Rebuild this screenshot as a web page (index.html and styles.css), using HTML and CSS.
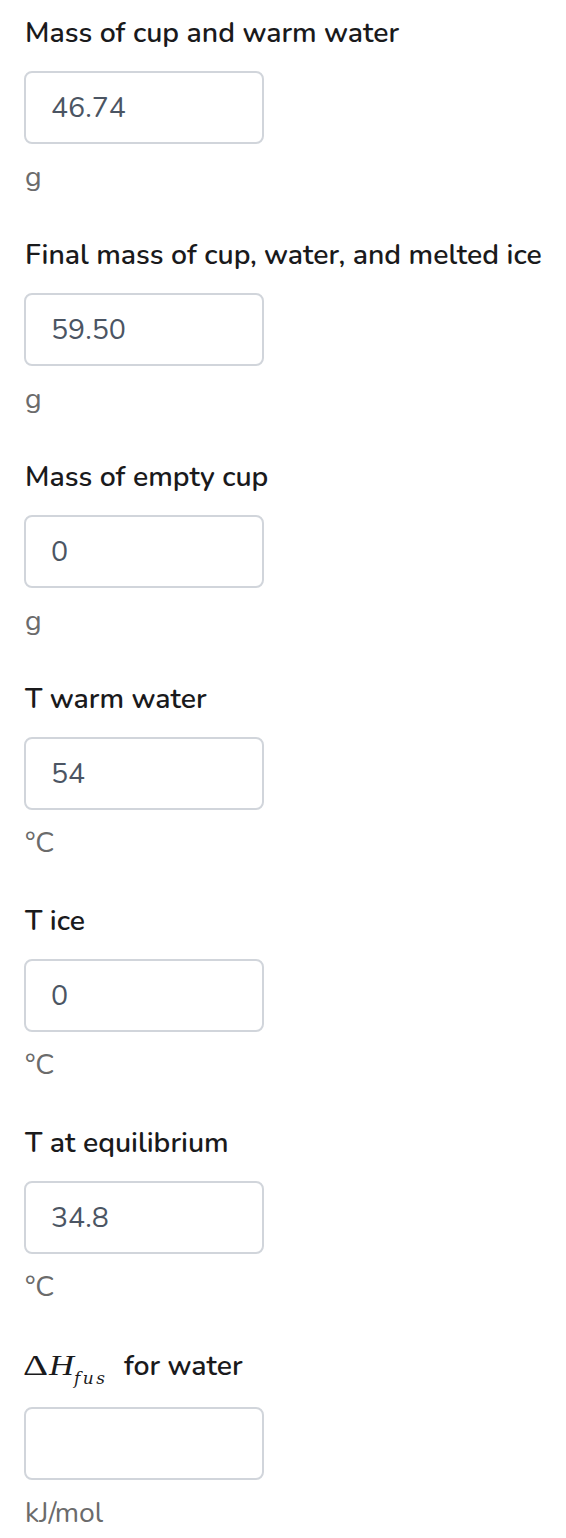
FILE: index.html
```html
<!DOCTYPE html>
<html lang="en">
<head>
<meta charset="utf-8">
<title>Calorimetry inputs</title>
<link rel="stylesheet" href="styles.css">
</head>
<body>
<form class="form">
  <div class="field">
    <label class="label">Mass of cup and warm water</label>
    <input class="input" type="text" value="46.74">
    <div class="unit">g</div>
  </div>
  <div class="field">
    <label class="label">Final mass of cup, water, and melted ice</label>
    <input class="input" type="text" value="59.50">
    <div class="unit">g</div>
  </div>
  <div class="field">
    <label class="label">Mass of empty cup</label>
    <input class="input" type="text" value="0">
    <div class="unit">g</div>
  </div>
  <div class="field">
    <label class="label">T warm water</label>
    <input class="input" type="text" value="54">
    <div class="unit">°C</div>
  </div>
  <div class="field">
    <label class="label">T ice</label>
    <input class="input" type="text" value="0">
    <div class="unit">°C</div>
  </div>
  <div class="field">
    <label class="label">T at equilibrium</label>
    <input class="input" type="text" value="34.8">
    <div class="unit">°C</div>
  </div>
  <div class="field">
    <label class="label"><span class="math"><span class="delta">Δ</span><span class="mi">H</span><span class="sub">fus</span></span> for water</label>
    <input class="input" type="text" value="">
    <div class="unit">kJ/mol</div>
  </div>
</form>
</body>
</html>
```

FILE: styles.css
```css
html, body {
  margin: 0;
  padding: 0;
  background: #ffffff;
}

body {
  font-family: "Nunito", "Lato", "Open Sans", sans-serif;
}

.form {
  display: flex;
  flex-direction: column;
  padding: 13px 0 0 25px;
}

.field {
  display: flex;
  flex-direction: column;
  align-items: flex-start;
  height: 222px;
}

.label {
  display: block;
  font-size: 28.4px;
  line-height: 40px;
  font-weight: 600;
  color: #1a1a1c;
  white-space: nowrap;
}

.input {
  box-sizing: border-box;
  margin-top: 18px;
  margin-left: -1px;
  width: 240px;
  height: 73px;
  border: 2px solid #d1d5db;
  border-radius: 8px;
  padding: 0 0 0 25px;
  font-family: inherit;
  font-size: 28.5px;
  color: #4b5563;
  background: #ffffff;
  outline: none;
}

.unit {
  margin-top: 13px;
  font-size: 28.4px;
  line-height: 40px;
  color: #6b6b6b;
}

.math {
  font-family: "Liberation Serif", "DejaVu Serif", serif;
  font-weight: 400;
  font-size: 30px;
  margin-right: 9px;
  margin-left: -2px;
}

.delta {
  font-style: normal;
  display: inline-block;
  transform: scaleX(1.3);
  transform-origin: left center;
  margin-right: 7px;
}

.mi {
  font-style: italic;
  display: inline-block;
  transform: scaleX(1.15);
  transform-origin: left center;
  margin-right: 2px;
}

.sub {
  font-family: "DejaVu Serif", serif;
  font-style: italic;
  font-size: 17px;
  letter-spacing: 2.5px;
  position: relative;
  top: 9px;
  margin-left: 1px;
}
```
